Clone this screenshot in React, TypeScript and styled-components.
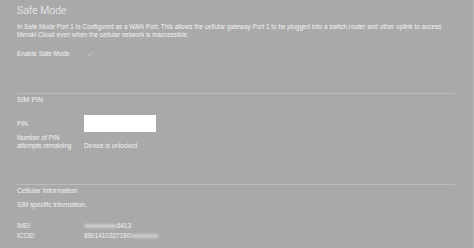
import React from "react";
import styled, { createGlobalStyle } from "styled-components";

const GlobalStyle = createGlobalStyle`
  html, body {
    margin: 0;
    padding: 0;
    background: #a9a9a9;
  }
  body {
    font-family: "Liberation Sans", Arial, sans-serif;
    color: #f4f4f4;
  }
`;

const Page = styled.div`
  width: 474px;
  height: 248px;
  box-sizing: border-box;
  padding: 0 18px 0 17px;
  background: #a9a9a9;
  overflow: hidden;
  border-right: 1px solid #b4b4b4;
`;

const Section = styled.section<{ $divided?: boolean; $bottom?: number }>`
  border-top: ${(p) => (p.$divided ? "1px solid #bcbcbc" : "none")};
  padding-bottom: ${(p) => p.$bottom ?? 0}px;
`;

const Title = styled.h2`
  margin: 0;
  font-family: Roboto, "Liberation Sans", sans-serif;
  font-weight: 300;
  font-size: 10.5px;
  line-height: 12px;
  padding-top: 5px;
  color: #f6f6f6;
`;

const SubTitle = styled.h3`
  margin: 0;
  font-weight: 400;
  font-size: 7px;
  line-height: 9px;
  padding-top: 1px;
  color: #f2f2f2;
`;

const Text = styled.p<{ $top?: number }>`
  margin: ${(p) => p.$top ?? 0}px 0 0;
  font-size: 6.4px;
  line-height: 8px;
  color: #f2f2f2;
`;

const Row = styled.div<{ $top?: number }>`
  display: grid;
  grid-template-columns: 67px 1fr;
  align-items: center;
  margin-top: ${(p) => p.$top ?? 0}px;
  font-size: 6.4px;
  line-height: 8px;
  color: #f2f2f2;
`;

const Bottom = styled.span`
  align-self: end;
`;

const Input = styled.div`
  width: 72px;
  height: 17px;
  background: #ffffff;
`;

const Check = styled.span`
  display: inline-flex;
  width: 8px;
  height: 8px;
  align-items: center;
  justify-content: center;
  margin-left: 2px;
`;

const Blur = styled.span<{ $w: number }>`
  display: inline-block;
  width: ${(p) => p.$w}px;
  height: 4px;
  vertical-align: middle;
  background: #cbcbcb;
  border-radius: 2px;
  filter: blur(1px);
`;

export default function App() {
  return (
    <>
      <GlobalStyle />
      <Page>
        <Section $bottom={35}>
          <Title>Safe Mode</Title>
          <Text $top={6}>
            In Safe Mode Port 1 Is Configured as a WAN Port. This allows the
            cellular gateway Port 1 to be plugged into a switch,router and other
            uplink to access Meraki Cloud even when the cellular network is
            inaccessible.
          </Text>
          <Row $top={11}>
            <span>Enable Safe Mode</span>
            <Check>
              <svg width="6" height="6" viewBox="0 0 10 10">
                <path
                  d="M2 5.5 L4 7.5 L8 2.5"
                  fill="none"
                  stroke="#dcdcdc"
                  strokeWidth="1.4"
                />
              </svg>
            </Check>
          </Row>
        </Section>
        <Section $divided $bottom={34}>
          <SubTitle>SIM PIN</SubTitle>
          <Row $top={11}>
            <span>PIN</span>
            <Input />
          </Row>
          <Row $top={2}>
            <span>
              Number of PIN
              <br />
              attempts remaining
            </span>
            <Bottom>Device is unlocked</Bottom>
          </Row>
        </Section>
        <Section $divided>
          <SubTitle>Cellular Information</SubTitle>
          <Text $top={6}>SIM specific information.</Text>
          <Row $top={13}>
            <span>IMEI</span>
            <span>
              <Blur $w={33} />
              6413
            </span>
          </Row>
          <Row $top={2}>
            <span>ICCID</span>
            <span>
              8901410327180
              <Blur $w={29} />
            </span>
          </Row>
        </Section>
      </Page>
    </>
  );
}
